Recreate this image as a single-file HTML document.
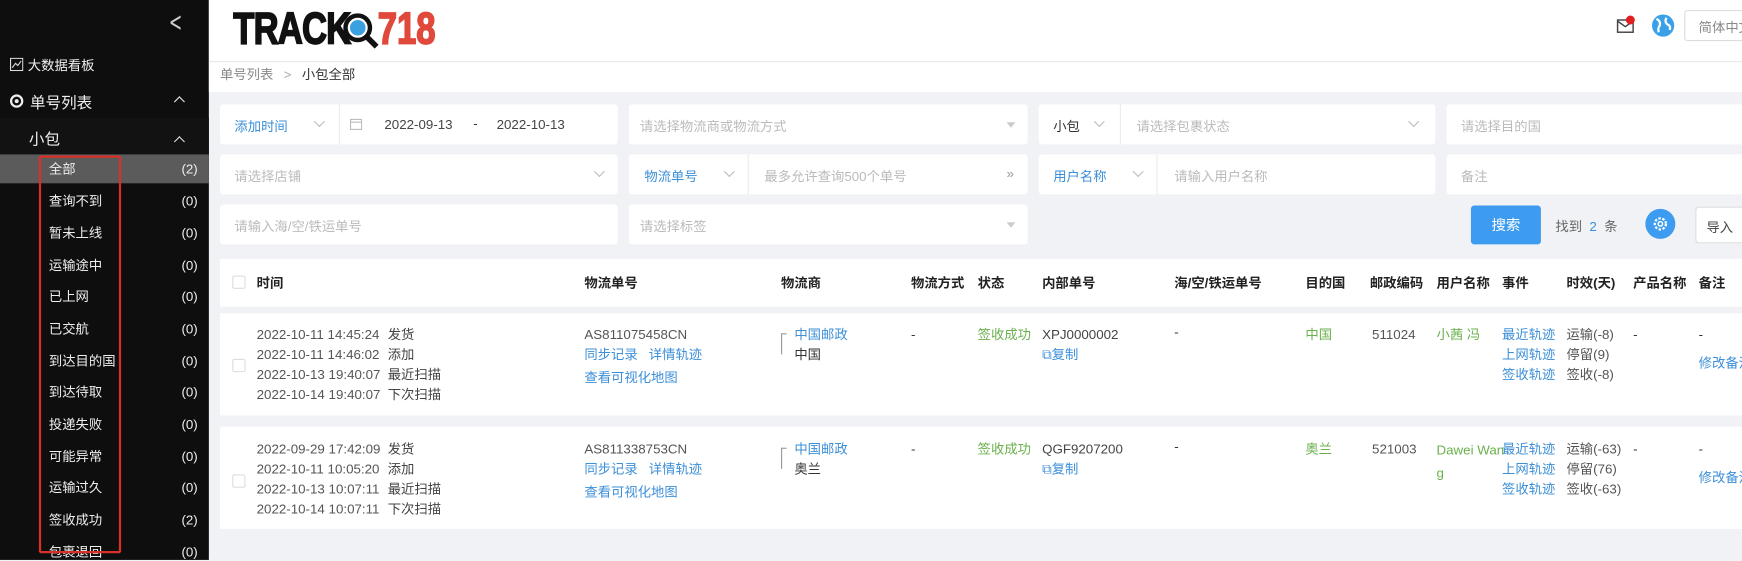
<!DOCTYPE html>
<html><head><meta charset="utf-8"><style>
*{margin:0;padding:0;box-sizing:border-box}
html,body{width:1742px;height:560px;overflow:hidden;background:#f0f2f5}
#w{position:absolute;left:0;top:0;width:1568px;height:504px;transform:scale(1.11097);transform-origin:0 0;font-family:"Liberation Sans","Noto Sans CJK SC",sans-serif;font-size:12px;color:#333;background:#f0f2f5}
.a{position:absolute;white-space:nowrap}
#sb{position:absolute;left:0;top:0;width:188px;height:504px;background:#0e0e0e;color:#eee}
.it{position:absolute;left:44px;font-size:12px;color:#eee;line-height:16px}
.ct{position:absolute;right:10px;font-size:12px;color:#eee;line-height:16px}
.box{position:absolute;background:#fff;border-radius:3px;height:36px}
.ph{color:#bbb;font-size:12px}
.bl{color:#3d8fd8}
.gr{color:#6ab04c}
.dv{position:absolute;top:0;width:1px;height:36px;background:#ececec}
.chev{position:absolute;width:7px;height:7px;border-right:1px solid #bbb;border-bottom:1px solid #bbb;transform:rotate(45deg)}
.tri{position:absolute;width:0;height:0;border-left:4px solid transparent;border-right:4px solid transparent;border-top:5px solid #ccc}
.th{position:absolute;top:246px;font-weight:bold;font-size:12px;color:#222}
.cb{position:absolute;width:12px;height:12px;border:1px solid #ddd;background:#fff;border-radius:2px}
.tx{position:absolute;font-size:12px;line-height:18px;white-space:nowrap}
.logo{position:absolute;font-size:40px;font-weight:bold;transform:scaleX(.78);transform-origin:0 0;font-family:'Liberation Sans',sans-serif;-webkit-text-stroke:1.5px currentColor}
</style></head><body><div id="w">
<div id="sb">
 <div class="a" style="left:148px;top:6px;font-size:24px;color:#ccc;font-family:'DejaVu Sans',sans-serif;transform:scaleX(.6)">&lt;</div>
 <svg class="a" style="left:9px;top:52px" width="12" height="12" viewBox="0 0 12 12"><rect x="0.5" y="0.5" width="11" height="11" fill="none" stroke="#ddd"/><path d="M2 9 L5 5 L7 7 L10 3" fill="none" stroke="#ddd"/></svg>
 <div class="a" style="left:25px;top:50px;font-size:12px">大数据看板</div>
 <svg class="a" style="left:8px;top:84px" width="14" height="14" viewBox="0 0 14 14"><circle cx="7" cy="7" r="5" fill="none" stroke="#eee" stroke-width="2"/><circle cx="7" cy="7" r="1.8" fill="#eee"/></svg>
 <div class="a" style="left:27px;top:82px;font-size:14px">单号列表</div>
 <div class="a" style="left:158px;top:88px;width:7px;height:7px;border-left:1.5px solid #ddd;border-top:1.5px solid #ddd;transform:rotate(45deg)"></div>
 <div class="a" style="left:0;top:106px;width:188px;height:34px;background:#121212"></div>
 <div class="a" style="left:26px;top:115px;font-size:14px">小包</div>
 <div class="a" style="left:158px;top:124px;width:7px;height:7px;border-left:1.5px solid #ddd;border-top:1.5px solid #ddd;transform:rotate(45deg)"></div>
 <div class="a" style="left:0;top:139px;width:188px;height:26px;background:#5b5b5b"></div>
 <div class="it" style="top:144px">全部</div><div class="ct" style="top:144px">(2)</div>
 <div class="it" style="top:173px">查询不到</div><div class="ct" style="top:173px">(0)</div>
 <div class="it" style="top:202px">暂未上线</div><div class="ct" style="top:202px">(0)</div>
 <div class="it" style="top:231px">运输途中</div><div class="ct" style="top:231px">(0)</div>
 <div class="it" style="top:259px">已上网</div><div class="ct" style="top:259px">(0)</div>
 <div class="it" style="top:288px">已交航</div><div class="ct" style="top:288px">(0)</div>
 <div class="it" style="top:317px">到达目的国</div><div class="ct" style="top:317px">(0)</div>
 <div class="it" style="top:345px">到达待取</div><div class="ct" style="top:345px">(0)</div>
 <div class="it" style="top:374px">投递失败</div><div class="ct" style="top:374px">(0)</div>
 <div class="it" style="top:403px">可能异常</div><div class="ct" style="top:403px">(0)</div>
 <div class="it" style="top:431px">运输过久</div><div class="ct" style="top:431px">(0)</div>
 <div class="it" style="top:460px">签收成功</div><div class="ct" style="top:460px">(2)</div>
 <div class="it" style="top:489px">包裹退回</div><div class="ct" style="top:489px">(0)</div>
 <div class="a" style="left:35px;top:140px;width:74px;height:358px;border:2px solid #d9302a;border-radius:2px"></div>
</div>
<div class="a" style="left:188px;top:0;width:1380px;height:83px;background:#fff"></div>
<div class="a" style="left:188px;top:55px;width:1380px;height:1px;background:#e8e8e8"></div>
<div class="logo" style="left:210px;top:4px;color:#111;letter-spacing:-1px">TRACK</div>
<svg class="a" style="left:308px;top:11px" width="34" height="34" viewBox="0 0 34 34"><circle cx="14" cy="14" r="11" fill="none" stroke="#111" stroke-width="4"/><circle cx="14" cy="14" r="7" fill="#3aa0e0"/><path d="M22 22 L31 31" stroke="#111" stroke-width="5"/></svg>
<div class="logo" style="left:340px;top:4px;color:#e0493b">718</div>
<svg class="a" style="left:1455px;top:14px" width="18" height="18" viewBox="0 0 18 18"><rect x="1" y="4" width="14" height="11" fill="none" stroke="#444" stroke-width="1.3"/><path d="M1 5 L8 10 L15 5" fill="none" stroke="#444" stroke-width="1.3"/><circle cx="12.5" cy="4" r="4" fill="#e02020"/></svg>
<svg class="a" style="left:1486px;top:12px" width="22" height="22" viewBox="0 0 22 22"><circle cx="11" cy="11" r="10" fill="#3aa0e8"/><path d="M5 5 Q9 7 8 11 Q6 13 7 17 M14 4 Q12 8 15 10 Q18 11 17 15" fill="none" stroke="#fff" stroke-width="2"/></svg>
<div class="a" style="left:1516px;top:9px;width:60px;height:28px;border:1px solid #ddd;border-radius:3px;padding:6px 0 0 12px;color:#888;font-size:12px">简体中文</div>
<div class="a" style="left:198px;top:58px;color:#888">单号列表 <span style="color:#aaa;margin:0 6px">&gt;</span> <span style="color:#333">小包全部</span></div>

<div class="box" style="left:198px;top:94px;width:358px"><span class="a bl" style="left:13px;top:11px">添加时间</span><div class="chev" style="left:86px;top:12px"></div><div class="dv" style="left:107px"></div>
<svg class="a" style="left:117px;top:12px" width="11" height="11" viewBox="0 0 11 11"><rect x="0.5" y="1.5" width="10" height="9" fill="none" stroke="#bbb"/><path d="M0.5 4 H10.5" stroke="#bbb"/></svg>
<span class="a" style="left:148px;top:11px;color:#444">2022-09-13</span><span class="a" style="left:228px;top:10px">-</span><span class="a" style="left:249px;top:11px;color:#444">2022-10-13</span></div>
<div class="box" style="left:566px;top:94px;width:359px"><span class="a ph" style="left:10px;top:11px">请选择物流商或物流方式</span><div class="tri" style="left:340px;top:16px"></div></div>
<div class="box" style="left:935px;top:94px;width:357px"><span class="a" style="left:13px;top:11px">小包</span><div class="chev" style="left:51px;top:12px"></div><div class="dv" style="left:73px"></div><span class="a ph" style="left:88px;top:11px">请选择包裹状态</span><div class="chev" style="left:334px;top:12px"></div></div>
<div class="box" style="left:1302px;top:94px;width:280px"><span class="a ph" style="left:13px;top:11px">请选择目的国</span></div>

<div class="box" style="left:198px;top:139px;width:358px"><span class="a ph" style="left:13px;top:11px">请选择店铺</span><div class="chev" style="left:338px;top:12px"></div></div>
<div class="box" style="left:566px;top:139px;width:359px"><span class="a bl" style="left:14px;top:11px">物流单号</span><div class="chev" style="left:87px;top:12px"></div><div class="dv" style="left:107px"></div><span class="a ph" style="left:122px;top:11px">最多允许查询500个单号</span><span class="a" style="left:340px;top:10px;color:#999">»</span></div>
<div class="box" style="left:935px;top:139px;width:357px"><span class="a bl" style="left:13px;top:11px">用户名称</span><div class="chev" style="left:86px;top:12px"></div><div class="dv" style="left:106px"></div><span class="a ph" style="left:122px;top:11px">请输入用户名称</span></div>
<div class="box" style="left:1302px;top:139px;width:280px"><span class="a ph" style="left:13px;top:11px">备注</span></div>

<div class="box" style="left:198px;top:184px;width:358px"><span class="a ph" style="left:13px;top:11px">请输入海/空/铁运单号</span></div>
<div class="box" style="left:566px;top:184px;width:359px"><span class="a ph" style="left:10px;top:11px">请选择标签</span><div class="tri" style="left:340px;top:16px"></div></div>
<div class="a" style="left:1324px;top:185px;width:63px;height:35px;background:#3d9cf0;border-radius:3px;color:#fff;font-size:13px;text-align:center;line-height:35px">搜索</div>
<div class="a" style="left:1400px;top:195px;color:#666">找到 &nbsp;<span class="bl">2</span>&nbsp; 条</div>
<div class="a" style="left:1481px;top:188px;width:27px;height:27px;border-radius:50%;background:#3d9cf0"></div>
<svg class="a" style="left:1487px;top:194px" width="15" height="15" viewBox="0 0 15 15"><circle cx="7.5" cy="7.5" r="5" fill="none" stroke="#fff" stroke-width="2" stroke-dasharray="2.2 1.4"/><circle cx="7.5" cy="7.5" r="2" fill="none" stroke="#fff" stroke-width="1.3"/></svg>
<div class="a" style="left:1526px;top:186px;width:50px;height:33px;background:#fff;border:1px solid #ddd;border-radius:3px;padding:9px 0 0 9px;color:#444">导入</div>

<div class="a" style="left:198px;top:233px;width:1380px;height:43px;background:#fff"></div>
<div class="cb" style="left:209px;top:248px"></div>
<div class="th" style="left:231px">时间</div><div class="th" style="left:526px">物流单号</div><div class="th" style="left:703px">物流商</div><div class="th" style="left:820px">物流方式</div><div class="th" style="left:880px">状态</div><div class="th" style="left:938px">内部单号</div><div class="th" style="left:1057px">海/空/铁运单号</div><div class="th" style="left:1175px">目的国</div><div class="th" style="left:1233px">邮政编码</div><div class="th" style="left:1293px">用户名称</div><div class="th" style="left:1352px">事件</div><div class="th" style="left:1410px">时效(天)</div><div class="th" style="left:1470px">产品名称</div><div class="th" style="left:1529px">备注</div>

<div class="a" style="left:198px;top:282px;width:1380px;height:92px;background:#fff"></div>
<div class="cb" style="left:209px;top:323px"></div>
<div class="tx" style="left:231px;top:292px;color:#555">2022-10-11 14:45:24<br>2022-10-11 14:46:02<br>2022-10-13 19:40:07<br>2022-10-14 19:40:07</div>
<div class="tx" style="left:349px;top:292px;color:#444">发货<br>添加<br>最近扫描<br>下次扫描</div>
<div class="tx" style="left:526px;top:292px;color:#555">AS811075458CN<br><span class="bl">同步记录 &nbsp; 详情轨迹</span></div>
<div class="tx bl" style="left:526px;top:331px;font-size:12px">查看可视化地图</div>
<div class="a" style="left:703px;top:300px;width:5px;height:19px;border-left:1px solid #999;border-top:1px solid #999"></div>
<div class="tx" style="left:715px;top:292px"><span class="bl">中国邮政</span><br>中国</div>
<div class="tx" style="left:820px;top:292px">-</div>
<div class="tx gr" style="left:880px;top:292px">签收成功</div>
<div class="tx" style="left:938px;top:292px;color:#444">XPJ0000002<br><span class="bl">⧉复制</span></div>
<div class="tx" style="left:1057px;top:290px">-</div>
<div class="tx gr" style="left:1175px;top:292px">中国</div>
<div class="tx" style="left:1235px;top:292px;color:#555">511024</div>
<div class="tx gr" style="left:1293px;top:292px">小茜 冯</div>
<div class="tx bl" style="left:1352px;top:292px">最近轨迹<br>上网轨迹<br>签收轨迹</div>
<div class="tx" style="left:1410px;top:292px;color:#555">运输(-8)<br>停留(9)<br>签收(-8)</div>
<div class="tx" style="left:1470px;top:292px">-</div><div class="tx" style="left:1529px;top:292px">-</div>
<div class="tx bl" style="left:1529px;top:318px;font-size:12px">修改备注</div>

<div class="a" style="left:198px;top:384px;width:1380px;height:92px;background:#fff"></div>
<div class="cb" style="left:209px;top:427px"></div>
<div class="tx" style="left:231px;top:395px;color:#555">2022-09-29 17:42:09<br>2022-10-11 10:05:20<br>2022-10-13 10:07:11<br>2022-10-14 10:07:11</div>
<div class="tx" style="left:349px;top:395px;color:#444">发货<br>添加<br>最近扫描<br>下次扫描</div>
<div class="tx" style="left:526px;top:395px;color:#555">AS811338753CN<br><span class="bl">同步记录 &nbsp; 详情轨迹</span></div>
<div class="tx bl" style="left:526px;top:434px;font-size:12px">查看可视化地图</div>
<div class="a" style="left:703px;top:403px;width:5px;height:19px;border-left:1px solid #999;border-top:1px solid #999"></div>
<div class="tx" style="left:715px;top:395px"><span class="bl">中国邮政</span><br>奥兰</div>
<div class="tx" style="left:820px;top:395px">-</div>
<div class="tx gr" style="left:880px;top:395px">签收成功</div>
<div class="tx" style="left:938px;top:395px;color:#444">QGF9207200<br><span class="bl">⧉复制</span></div>
<div class="tx" style="left:1057px;top:393px">-</div>
<div class="tx gr" style="left:1175px;top:395px">奥兰</div>
<div class="tx" style="left:1235px;top:395px;color:#555">521003</div>
<div class="tx gr" style="left:1293px;top:395px;line-height:21px">Dawei Wan<br>g</div>
<div class="tx bl" style="left:1352px;top:395px">最近轨迹<br>上网轨迹<br>签收轨迹</div>
<div class="tx" style="left:1410px;top:395px;color:#555">运输(-63)<br>停留(76)<br>签收(-63)</div>
<div class="tx" style="left:1470px;top:395px">-</div><div class="tx" style="left:1529px;top:395px">-</div>
<div class="tx bl" style="left:1529px;top:421px;font-size:12px">修改备注</div>
</div></body></html>
